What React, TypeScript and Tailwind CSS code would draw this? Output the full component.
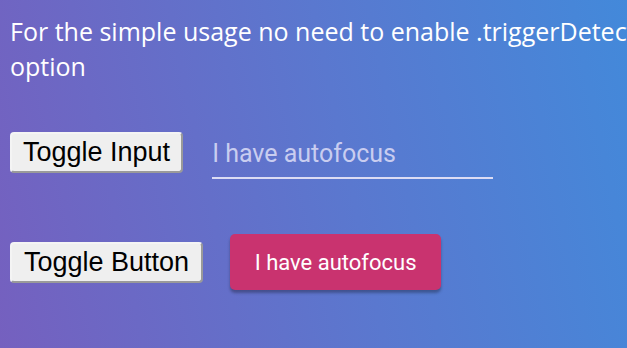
export default function App() {
  return (
    <div className="h-[348px] w-[627px] overflow-hidden bg-[linear-gradient(78deg,#7560bf_0%,#5a78cf_55%,#4389da_100%)]">
      <div className="w-[760px] px-[10px] pt-[14px]">
        <p className="w-[700px] font-['Open_Sans',sans-serif] text-[25px] leading-[35px] text-white">
          For the simple usage no need to enable .triggerDetection option
        </p>

        <div className="mt-[48px] flex items-start">
          <button className="h-[41px] rounded-[4px] border-2 border-t-[#f4f4f4] border-l-[#f4f4f4] border-r-[#9a9a9a] border-b-[#9a9a9a] bg-[#efefef] px-[11px] font-['Liberation_Sans',Arial,sans-serif] text-[27px] leading-[31px] text-black">
            Toggle Input
          </button>
          <div className="ml-[29px] w-[281px] border-b-2 border-[#dcdcf4] pb-[6px] pt-[5px]">
            <span className="font-['Roboto',sans-serif] text-[25px] leading-[34px] text-[#c9cdf0]">
              I have autofocus
            </span>
          </div>
        </div>

        <div className="mt-[55px] flex items-center">
          <button className="h-[41px] rounded-[4px] border-2 border-t-[#f4f4f4] border-l-[#f4f4f4] border-r-[#9a9a9a] border-b-[#9a9a9a] bg-[#efefef] px-[12px] font-['Liberation_Sans',Arial,sans-serif] text-[27px] leading-[31px] text-black">
            Toggle Button
          </button>
          <button className="ml-[27px] h-[56px] w-[211px] rounded-[5px] bg-[#c9336f] font-['Roboto',sans-serif] text-[22px] text-white shadow-[0_3px_3px_rgba(0,0,0,0.3)]">
            I have autofocus
          </button>
        </div>
      </div>
    </div>
  );
}
